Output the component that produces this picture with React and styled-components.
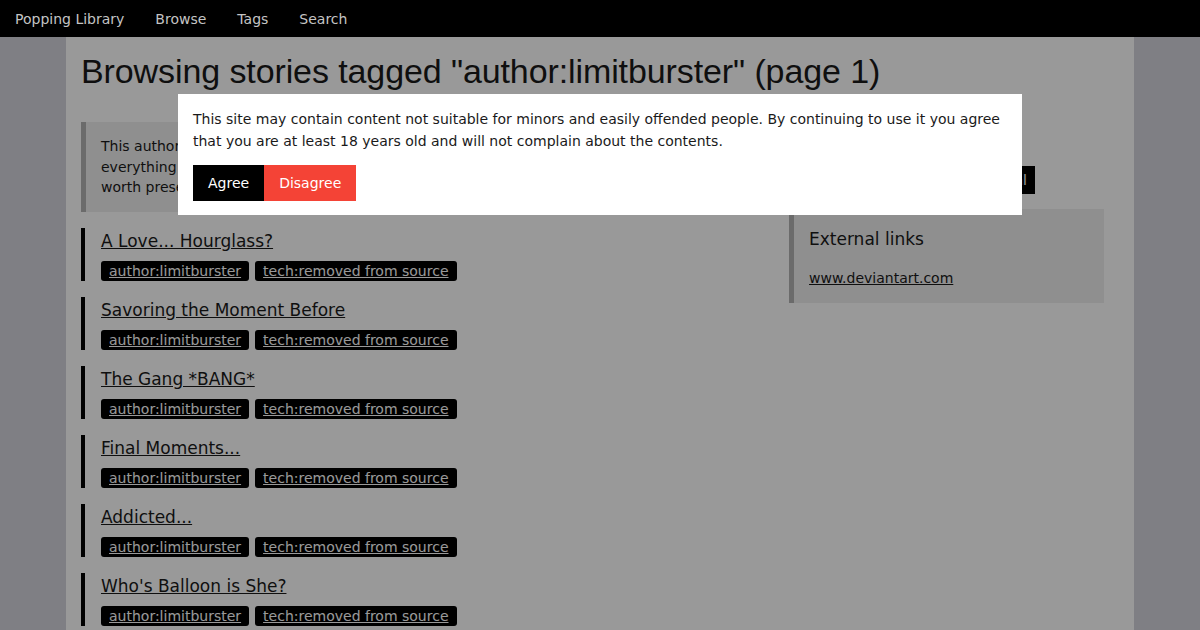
import React from 'react';
import styled, { createGlobalStyle } from 'styled-components';

const GlobalStyle = createGlobalStyle`
  html, body {
    margin: 0;
    padding: 0;
    background: #d4d4dc;
    font-family: "DejaVu Sans", Verdana, sans-serif;
    font-size: 14px;
    color: #1a1a1a;
  }
`;

const Nav = styled.nav`
  position: relative;
  z-index: 20;
  height: 37px;
  background: #000;
  display: flex;
  align-items: center;
  padding: 0 15px;
  gap: 31px;
`;

const NavLink = styled.a`
  color: #c4c4c4;
  font-size: 14px;
  text-decoration: none;
`;

const Container = styled.main`
  width: 1038px;
  margin: 0 auto;
  background: #fff;
  padding: 14px 15px 40px;
  min-height: 600px;
`;

const Heading = styled.h1`
  font-family: "Liberation Sans", Arial, sans-serif;
  font-weight: 400;
  font-size: 34px;
  line-height: 40px;
  margin: 0 0 31px;
  letter-spacing: -0.1px;
`;

const Columns = styled.div`
  display: grid;
  grid-template-columns: 1fr 315px;
  gap: 16px;
  padding-right: 15px;
`;

const Quote = styled.div`
  background: #eee;
  border-left: 5px solid #b2b2b2;
  padding: 14px 15px;
  line-height: 20.5px;
`;

const List = styled.ul`
  list-style: none;
  margin: 16px 0 0;
  padding: 0;
  display: flex;
  flex-direction: column;
  gap: 16px;
`;

const Story = styled.li`
  border-left: 4px solid #000;
  padding-left: 16px;
  display: flex;
  flex-direction: column;
  align-items: flex-start;
  gap: 7px;
`;

const StoryTitle = styled.a`
  font-size: 17px;
  color: #1a1a1a;
  text-decoration: underline;
  line-height: 26px;
`;

const Tags = styled.div`
  display: flex;
  gap: 6px;
`;

const Tag = styled.a`
  background: #000;
  color: #fff;
  border-radius: 3px;
  padding: 0 8px;
  line-height: 20px;
  text-decoration: underline;
`;

const Sidebar = styled.aside`
  display: flex;
  flex-direction: column;
  gap: 15px;
`;

const Sort = styled.div`
  display: flex;
  justify-content: flex-end;
  align-items: center;
  gap: 4px;
  margin-top: 44px;
  padding-right: 69px;
`;

const SortButton = styled.button`
  border: 0;
  background: ${p => (p.$active ? '#000' : '#ddd')};
  color: #fff;
  font: inherit;
  height: 28px;
  padding: 0 8px;
`;

const Panel = styled.section`
  background: #eee;
  border-left: 5px solid #b2b2b2;
  padding: 19px 15px 16px;
`;

const PanelTitle = styled.h3`
  font-size: 17px;
  font-weight: 400;
  line-height: 22px;
  margin: 0 0 19px;
`;

const PanelLink = styled.a`
  display: block;
  line-height: 18px;
  color: #1a1a1a;
  text-decoration: underline;
`;

const Backdrop = styled.div`
  position: fixed;
  inset: 37px 0 0 0;
  background: rgba(0, 0, 0, 0.4);
  z-index: 10;
`;

const Modal = styled.div`
  position: fixed;
  z-index: 30;
  top: 94px;
  left: 50%;
  transform: translateX(-50%);
  width: 814px;
  background: #fff;
  padding: 14px 15px 14px;
  line-height: 22px;
`;

const Buttons = styled.div`
  display: flex;
  margin-top: 13px;
`;

const ModalButton = styled.button`
  border: 0;
  font: inherit;
  font-size: 14px;
  color: #fff;
  background: ${p => (p.$danger ? '#f44336' : '#000')};
  height: 36px;
  padding: 0 15px;
  cursor: pointer;
`;

const stories = [
  'A Love... Hourglass?',
  'Savoring the Moment Before',
  'The Gang *BANG*',
  'Final Moments...',
  'Addicted...',
  "Who's Balloon is She?",
  'Pop Goes the Weasel',
];

export default function App() {
  return (
    <>
      <GlobalStyle />
      <Nav>
        <NavLink href="#">Popping Library</NavLink>
        <NavLink href="#">Browse</NavLink>
        <NavLink href="#">Tags</NavLink>
        <NavLink href="#">Search</NavLink>
      </Nav>
      <Container>
        <Heading>Browsing stories tagged "author:limitburster" (page 1)</Heading>
        <Columns>
          <div>
            <Quote>
              This author has removed their stories from DeviantArt. Archived copies are kept here, and
              everything we could recover is listed below. Some may be incomplete, but each one is still
              worth preserving for the community.
            </Quote>
            <List>
              {stories.map(title => (
                <Story key={title}>
                  <StoryTitle href="#">{title}</StoryTitle>
                  <Tags>
                    <Tag href="#">author:limitburster</Tag>
                    <Tag href="#">tech:removed from source</Tag>
                  </Tags>
                </Story>
              ))}
            </List>
          </div>
          <Sidebar>
            <Sort>
              <SortButton>Newest</SortButton>
              <SortButton $active>Original</SortButton>
            </Sort>
            <Panel>
              <PanelTitle>External links</PanelTitle>
              <PanelLink href="#">www.deviantart.com</PanelLink>
            </Panel>
          </Sidebar>
        </Columns>
      </Container>
      <Backdrop />
      <Modal>
        This site may contain content not suitable for minors and easily offended people. By
        continuing to use it you agree that you are at least 18 years old and will not complain
        about the contents.
        <Buttons>
          <ModalButton>Agree</ModalButton>
          <ModalButton $danger>Disagree</ModalButton>
        </Buttons>
      </Modal>
    </>
  );
}
